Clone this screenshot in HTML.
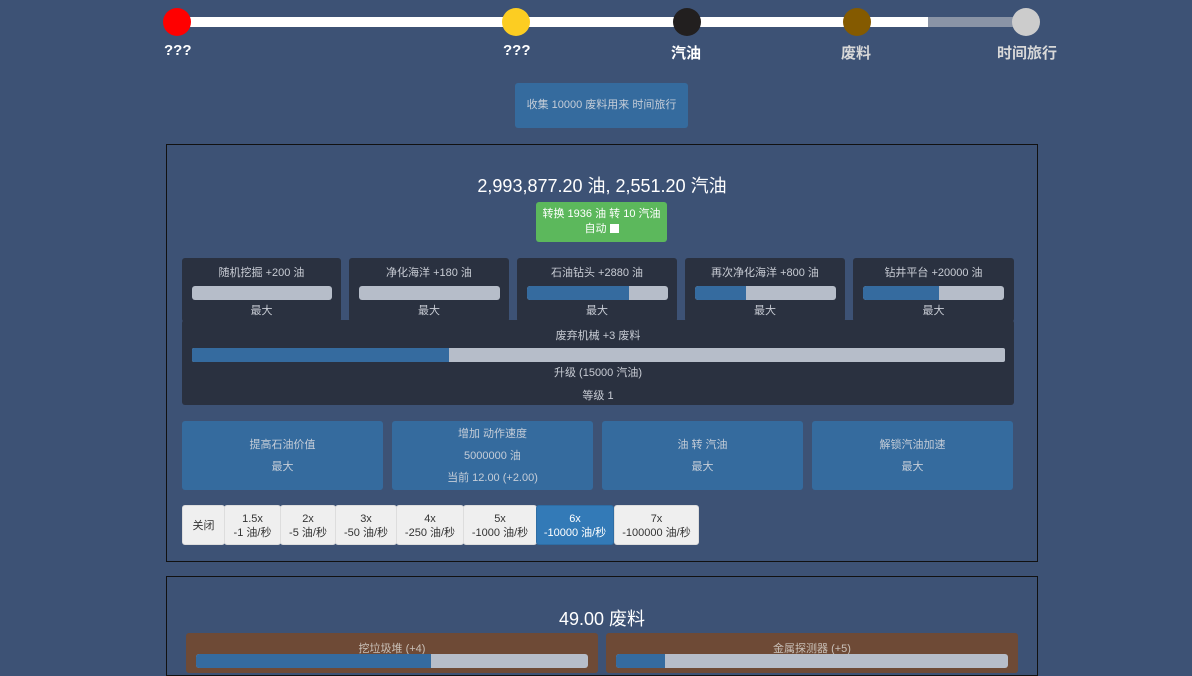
<!DOCTYPE html>
<html><head><meta charset="utf-8"><style>
*{margin:0;padding:0;box-sizing:border-box}
body{width:1192px;height:662px;overflow:hidden;background:#3d5275;font-family:"Liberation Sans","Noto Sans CJK SC",sans-serif;position:relative;color:#c8ccd4}
.a{position:absolute}
.c{text-align:center}
.dot{position:absolute;width:28px;height:28px;border-radius:50%;top:8px}
.lbl{position:absolute;top:42px;font-size:15px;font-weight:bold;color:#fff}
.card{position:absolute;background:#2a3140;border-radius:3px;font-size:11px;text-align:center}
.bar{position:absolute;height:14px;background:#b6bdc9;border-radius:3px;overflow:hidden}
.bar i{display:block;height:100%;background:#356b9f}
.bb{position:absolute;background:#356b9e;border-radius:3px;font-size:11px;text-align:center;color:#c5cdd8}
.sp{position:absolute;top:505px;height:40px;background:#efefef;border:1px solid #ddd;border-radius:3px;font-size:11px;color:#333;text-align:center;line-height:14px;padding-top:6px}
.br{position:absolute;top:633px;height:40px;background:#6e4a36;border-radius:3px;font-size:11px;text-align:center;color:#c9c0b8}
</style></head><body>
<div class="a" style="left:177px;top:17px;width:751px;height:10px;background:#fff"></div>
<div class="a" style="left:928px;top:17px;width:98px;height:10px;background:#8a94a6"></div>
<div class="dot" style="left:163px;background:#f00"></div>
<div class="dot" style="left:502px;background:#fccd22"></div>
<div class="dot" style="left:673px;background:#221f1f"></div>
<div class="dot" style="left:843px;background:#845a00"></div>
<div class="dot" style="left:1012px;background:#ccc"></div>
<div class="lbl" style="left:164px">???</div>
<div class="lbl" style="left:503px">???</div>
<div class="lbl" style="left:671px">汽油</div>
<div class="lbl" style="left:841px;color:#d8d8d8">废料</div>
<div class="lbl" style="left:997px;color:#d8d8d8">时间旅行</div>
<div class="bb" style="left:515px;top:83px;width:173px;height:45px;line-height:45px">收集 10000 废料用来 时间旅行</div>

<div class="a" style="left:166px;top:144px;width:872px;height:418px;border:1px solid #111"></div>
<div class="a c" style="left:166px;top:172px;width:872px;font-size:18px;color:#fff">2,993,877.20 油, 2,551.20 汽油</div>
<div class="a c" style="left:536px;top:202px;width:131px;height:40px;background:#5cb85c;border-radius:3px;font-size:11px;color:#fff;line-height:15px;padding-top:5px">转换 1936 油 转 10 汽油<br>自动 <span style="display:inline-block;width:9px;height:9px;background:#fff;vertical-align:-1px"></span></div>

<div class="card" style="left:182px;top:258px;width:159px;height:64px"><div style="margin-top:6px">随机挖掘 +200 油</div><div class="bar" style="left:10px;top:28px;width:140px"></div><div style="position:absolute;top:44px;width:100%">最大</div></div>
<div class="card" style="left:349px;top:258px;width:160px;height:64px"><div style="margin-top:6px">净化海洋 +180 油</div><div class="bar" style="left:10px;top:28px;width:141px"></div><div style="position:absolute;top:44px;width:100%">最大</div></div>
<div class="card" style="left:517px;top:258px;width:160px;height:64px"><div style="margin-top:6px">石油钻头 +2880 油</div><div class="bar" style="left:10px;top:28px;width:141px"><i style="width:72%"></i></div><div style="position:absolute;top:44px;width:100%">最大</div></div>
<div class="card" style="left:685px;top:258px;width:160px;height:64px"><div style="margin-top:6px">再次净化海洋 +800 油</div><div class="bar" style="left:10px;top:28px;width:141px"><i style="width:36%"></i></div><div style="position:absolute;top:44px;width:100%">最大</div></div>
<div class="card" style="left:853px;top:258px;width:161px;height:64px"><div style="margin-top:6px">钻井平台 +20000 油</div><div class="bar" style="left:10px;top:28px;width:141px"><i style="width:54%"></i></div><div style="position:absolute;top:44px;width:100%">最大</div></div>
<div class="card" style="left:182px;top:320px;width:832px;height:85px"><div style="margin-top:7px">废弃机械 +3 废料</div><div class="bar" style="left:10px;top:28px;width:813px;border-radius:2px"><i style="width:31.6%"></i></div><div style="position:absolute;top:44px;width:100%">升级 (15000 汽油)</div><div style="position:absolute;top:67px;width:100%">等级 1</div></div>

<div class="bb" style="left:182px;top:421px;width:201px;height:69px;padding-top:13px;line-height:22px">提高石油价值<br>最大</div>
<div class="bb" style="left:392px;top:421px;width:201px;height:69px;padding-top:2px;line-height:22px">增加 动作速度<br>5000000 油<br>当前 12.00 (+2.00)</div>
<div class="bb" style="left:602px;top:421px;width:201px;height:69px;padding-top:13px;line-height:22px">油 转 汽油<br>最大</div>
<div class="bb" style="left:812px;top:421px;width:201px;height:69px;padding-top:13px;line-height:22px">解锁汽油加速<br>最大</div>

<div class="sp" style="left:182px;width:43px;padding-top:13px">关闭</div>
<div class="sp" style="left:224px;width:57px">1.5x<br>-1 油/秒</div>
<div class="sp" style="left:280px;width:56px">2x<br>-5 油/秒</div>
<div class="sp" style="left:335px;width:62px">3x<br>-50 油/秒</div>
<div class="sp" style="left:396px;width:68px">4x<br>-250 油/秒</div>
<div class="sp" style="left:463px;width:74px">5x<br>-1000 油/秒</div>
<div class="sp" style="left:536px;width:78px;background:#337ab7;border-color:#2e6da4;color:#fff">6x<br>-10000 油/秒</div>
<div class="sp" style="left:614px;width:85px">7x<br>-100000 油/秒</div>

<div class="a" style="left:166px;top:576px;width:872px;height:100px;border:1px solid #111"></div>
<div class="a c" style="left:166px;top:605px;width:872px;font-size:18px;color:#fff">49.00 废料</div>
<div class="br" style="left:186px;width:412px"><div style="margin-top:7px">挖垃圾堆 (+4)</div><div class="bar" style="left:10px;top:21px;width:392px"><i style="width:60%"></i></div></div>
<div class="br" style="left:606px;width:412px"><div style="margin-top:7px">金属探测器 (+5)</div><div class="bar" style="left:10px;top:21px;width:392px"><i style="width:12.5%"></i></div></div>
</body></html>
